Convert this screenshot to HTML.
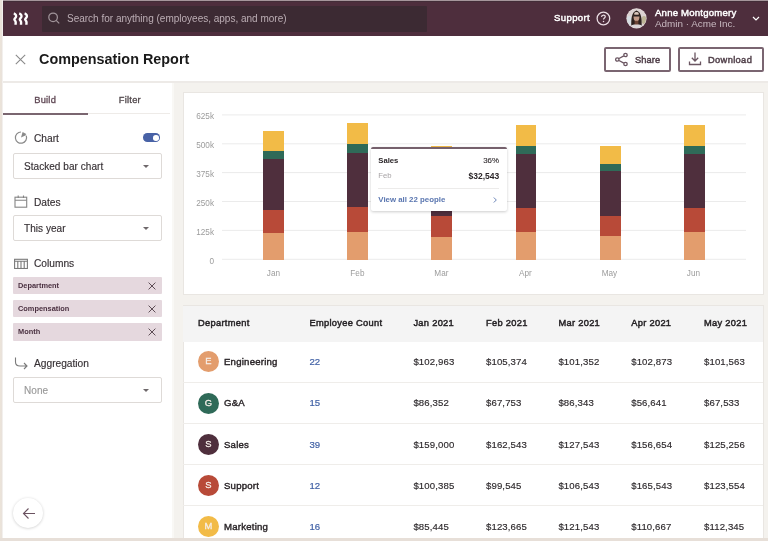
<!DOCTYPE html>
<html><head><meta charset="utf-8">
<style>
*{box-sizing:border-box;margin:0;padding:0}
html,body{width:768px;height:541px;overflow:hidden;background:#f4f2ee;font-family:"Liberation Sans",sans-serif;}
.a{position:absolute;white-space:nowrap}
#wrap{position:absolute;left:0;top:0;width:768px;height:541px;background:#f4f2ee;overflow:hidden;filter:blur(0.35px)}
#lb{position:absolute;left:0;top:0;width:3px;height:541px;background:linear-gradient(to right,#ebe3d8 0,#e9e2dc 2px,#f1eeeb 2px,#f4f2ef 3px)}
#top{position:absolute;left:3px;top:2px;width:765px;height:34px;background:#4e2e3d}
#topline{position:absolute;left:3px;top:0;width:765px;height:2px;background:linear-gradient(#a6969c 0,#a6969c 1px,#432d38 1px)}
#search{position:absolute;left:42px;top:6px;width:384.5px;height:25.5px;background:#3c2a33;border-radius:1px}
#hdr{position:absolute;left:3px;top:36px;width:765px;height:47px;background:#fff;border-bottom:2px solid #edeae7}
.btn{position:absolute;border:2px solid #7a6571;border-radius:2px;background:#fff;color:#4a3040;font-weight:700;font-size:9.3px}
#left{position:absolute;left:3px;top:83px;width:168.5px;height:456px;background:#fff}
#ledge{position:absolute;left:171.5px;top:83px;width:2.5px;height:456px;background:#f9f8f5}
.sel{position:absolute;left:13px;width:149px;border:1px solid #dedad7;border-radius:2px;background:#fff}
.sel span{position:absolute;left:10px;font-size:10px;color:#363034;-webkit-text-stroke:0.15px currentColor;letter-spacing:0.05px}
.caret{position:absolute;right:12px;width:0;height:0;border-left:3px solid transparent;border-right:3px solid transparent;border-top:3.5px solid #6e686b}
.lbl{font-size:10.2px;color:#363034;-webkit-text-stroke:0.15px currentColor}
.tag{position:absolute;left:13px;width:149px;height:17.2px;background:#e5d8de;border-radius:1px}
.tag span{position:absolute;left:5px;top:3.5px;font-size:7.4px;font-weight:700;color:#4a3040}
.card{position:absolute;background:#fff;border:1px solid #e9e6e2}
.yl{position:absolute;font-size:8.2px;color:#9c9c9c;text-align:right;width:40px}
.gl{position:absolute;left:222px;width:524px;height:1px;background:#ececec}
.bar{position:absolute;width:20.8px}
.ml{position:absolute;font-size:8.2px;color:#9c9c9c;text-align:center;width:40px}
.th{position:absolute;font-size:9.3px;font-weight:400;-webkit-text-stroke:0.45px #252225;letter-spacing:0.3px;color:#252225}
.med{font-weight:400 !important;-webkit-text-stroke:0.3px currentColor;letter-spacing:0.25px}
.td{position:absolute;font-size:9.6px;color:#2e2a2d;letter-spacing:0.12px;-webkit-text-stroke:0.15px #2e2a2d}
.num{position:absolute;font-size:9.6px;color:#4262a6;-webkit-text-stroke:0.2px #4262a6}
.dept{position:absolute;font-size:9.6px;font-weight:400;-webkit-text-stroke:0.4px #2a2528;letter-spacing:0.22px;color:#2a2528}
.av{position:absolute;left:198px;width:21px;height:21px;border-radius:50%;color:#f6eee8;font-size:9.4px;-webkit-text-stroke:0.3px #f6eee8;text-align:center;line-height:20px}
.rb{position:absolute;left:183px;width:580px;height:1px;background:#efedea}
</style></head><body>
<div id="wrap">
<div id="lb"></div>
<div id="topline"></div>
<div id="top"></div>
<!-- logo -->
<svg class="a" style="left:12px;top:11.5px" width="18" height="14" viewBox="0 0 18 14">
<g fill="none" stroke="#fff" stroke-width="2.4" stroke-linejoin="round">
<path d="M1.8 1.3 C3.8 2 4.6 3.6 3.8 5.3 C3.3 6.3 2.4 6.8 2.4 7.6 C2.4 8.4 3.7 8.9 3.7 10.2 L3.6 12.8"/>
<path d="M7.2 1.3 C9.2 2 10 3.6 9.2 5.3 C8.7 6.3 7.8 6.8 7.8 7.6 C7.8 8.4 9.1 8.9 9.1 10.2 L9 12.8"/>
<path d="M12.6 1.3 C14.6 2 15.4 3.6 14.6 5.3 C14.1 6.3 13.2 6.8 13.2 7.6 C13.2 8.4 14.5 8.9 14.5 10.2 L14.4 12.8"/>
</g></svg>
<div id="search"></div>
<svg class="a" style="left:48px;top:11.6px" width="14" height="13" viewBox="0 0 14 13">
<circle cx="5.1" cy="5.3" r="4.3" fill="none" stroke="#a0949a" stroke-width="1.25"/>
<path d="M8.2 8.4 L11.2 11.4" stroke="#a0949a" stroke-width="1.3"/>
</svg>
<div class="a" style="left:67px;top:13px;font-size:10px;color:#bcaeb5">Search for anything (employees, apps, and more)</div>
<div class="a med" style="left:554px;top:12px;font-size:9.6px;color:#fff;letter-spacing:0.36px;-webkit-text-stroke:0.45px #fff">Support</div>
<svg class="a" style="left:596px;top:10.6px" width="15" height="15" viewBox="0 0 15 15">
<circle cx="7.4" cy="7.5" r="6.3" fill="none" stroke="#ecdfe5" stroke-width="1.25"/>
<path d="M5.6 6 C5.6 4.7 6.4 4.1 7.4 4.1 C8.5 4.1 9.3 4.8 9.3 5.8 C9.3 7 7.5 7.2 7.5 8.6" fill="none" stroke="#ecdfe5" stroke-width="1.2"/>
<circle cx="7.5" cy="10.5" r="0.75" fill="#ecdfe5"/>
</svg>
<!-- avatar -->
<svg class="a" style="left:626px;top:8px" width="21" height="21" viewBox="0 0 21 21">
<defs><clipPath id="cp"><circle cx="10.5" cy="10.4" r="9.6"/></clipPath></defs>
<circle cx="10.5" cy="10.4" r="10.1" fill="#e6dcdc"/>
<g clip-path="url(#cp)">
<rect x="0" y="0" width="21" height="21" fill="#dcd2d2"/>
<ellipse cx="3" cy="13" rx="3" ry="5" fill="#d5dde2"/>
<ellipse cx="18" cy="12" rx="2.5" ry="4" fill="#bdb596"/>
<path d="M5.3 18 C5.3 12 5 4.5 10.5 2.6 C16 4.5 15.7 12 15.7 18 Z" fill="#2c211d"/>
<ellipse cx="10.5" cy="9.2" rx="2.9" ry="3.9" fill="#c29a88"/>
<ellipse cx="10.5" cy="5.4" rx="2.2" ry="1.4" fill="#d8c6bc"/>
<rect x="7.3" y="6.7" width="6.4" height="1.9" rx="0.8" fill="#2a2020"/>
<rect x="8.6" y="12.8" width="3.8" height="4.5" fill="#6a4436"/>
<path d="M2 21 C4 17 7 16.5 10.5 16.5 C14 16.5 17 17 19 21 Z" fill="#d9d5d8"/>
</g>
</svg>
<div class="a med" style="left:655px;top:6.6px;font-size:9.6px;color:#fff;letter-spacing:0.2px;-webkit-text-stroke:0.45px #fff">Anne Montgomery</div>
<div class="a" style="left:655px;top:17.8px;font-size:9.9px;color:#c8b9c0">Admin · Acme Inc.</div>
<svg class="a" style="left:751px;top:15px" width="10" height="7" viewBox="0 0 10 7">
<path d="M2 2 L5 5 L8 2" fill="none" stroke="#fff" stroke-width="1.2"/>
</svg>

<div id="hdr"></div>
<svg class="a" style="left:15px;top:54px" width="11" height="11" viewBox="0 0 11 11">
<path d="M0.8 0.8 L10.2 10.2 M10.2 0.8 L0.8 10.2" stroke="#8a8a8a" stroke-width="1.1"/>
</svg>
<div class="a" style="left:39px;top:50.5px;font-size:14.4px;font-weight:700;color:#1a1a1a">Compensation Report</div>
<div class="btn" style="left:603.5px;top:47px;width:67px;height:25px"></div>
<svg class="a" style="left:614px;top:52px" width="15" height="15" viewBox="0 0 15 15">
<g fill="none" stroke="#6a5561" stroke-width="1.3">
<circle cx="3.3" cy="7.5" r="1.7"/><circle cx="11.5" cy="3" r="1.7"/><circle cx="11.5" cy="12" r="1.7"/>
<path d="M5 6.5 L9.8 3.9 M5 8.5 L9.8 11.1"/>
</g></svg>
<div class="a med" style="left:635px;top:54.7px;font-size:9.3px;color:#51404a;letter-spacing:0.1px;-webkit-text-stroke:0.45px #51404a">Share</div>
<div class="btn" style="left:677.5px;top:47px;width:86px;height:25px"></div>
<svg class="a" style="left:688px;top:51px" width="14" height="15" viewBox="0 0 14 15">
<g fill="none" stroke="#6a5561" stroke-width="1.3">
<path d="M7 1.5 L7 10 M3.8 6.8 L7 10 L10.2 6.8"/>
<path d="M1.5 10.5 L1.5 13.5 L12.5 13.5 L12.5 10.5"/>
</g></svg>
<div class="a med" style="left:708px;top:54.7px;font-size:9.3px;color:#51404a;letter-spacing:0.35px;-webkit-text-stroke:0.45px #51404a">Download</div>

<!-- left panel -->
<div id="left"></div><div id="ledge"></div>
<div class="a" style="left:3px;top:113px;width:167px;height:1px;background:#eeebe8"></div>
<div class="a" style="left:3px;top:112.5px;width:85px;height:2px;background:#7a6670"></div>
<div class="a med" style="left:34.2px;top:95.3px;font-size:9.3px;color:#5e4653">Build</div>
<div class="a med" style="left:118.8px;top:95.3px;font-size:9.3px;color:#4e4549">Filter</div>

<svg class="a" style="left:14px;top:131px" width="14" height="14" viewBox="0 0 14 14">
<path d="M7 1 A5.6 5.6 0 1 0 12.3 4.8" fill="none" stroke="#8a8a8a" stroke-width="1.2"/>
<path d="M7 6.6 L8.6 0.9 A5.9 5.9 0 0 1 12.4 4.1 Z" fill="#8a8a8a"/>
</svg>
<div class="a lbl" style="left:34px;top:132.6px">Chart</div>
<div class="a" style="left:143.3px;top:133.4px;width:16.8px;height:8.6px;border-radius:4.3px;background:#4862a6"></div>
<div class="a" style="left:153.1px;top:135px;width:5.6px;height:5.6px;border-radius:50%;background:#fff"></div>
<div class="sel" style="top:153px;height:26px"><span style="top:6.5px">Stacked bar chart</span><div class="caret" style="top:10.5px"></div></div>

<svg class="a" style="left:14px;top:195px" width="14" height="13" viewBox="0 0 14 13">
<g fill="none" stroke="#858585" stroke-width="1.1">
<rect x="1" y="2.2" width="11.7" height="10"/><path d="M1 5.2 L12.7 5.2 M4.2 0.6 L4.2 3 M9.5 0.6 L9.5 3"/>
</g></svg>
<div class="a lbl" style="left:34px;top:197px">Dates</div>
<div class="sel" style="top:215px;height:26px"><span style="top:6.5px">This year</span><div class="caret" style="top:10.5px"></div></div>

<svg class="a" style="left:14px;top:258px" width="14" height="11" viewBox="0 0 14 11">
<g fill="none" stroke="#7a7a7a" stroke-width="1.1">
<rect x="0.6" y="1.3" width="12.8" height="9.2"/><path d="M0.6 3.2 L13.4 3.2 M3.8 3.2 L3.8 10.5 M7 3.2 L7 10.5 M10.2 3.2 L10.2 10.5"/>
</g></svg>
<div class="a lbl" style="left:34px;top:258.4px">Columns</div>
<div class="tag" style="top:277px"><span>Department</span></div>
<div class="tag" style="top:300.2px"><span>Compensation</span></div>
<div class="tag" style="top:323.4px"><span>Month</span></div>
<svg class="a" style="left:148px;top:282px" width="8" height="8" viewBox="0 0 8 8"><path d="M0.6 0.6 L7.4 7.4 M7.4 0.6 L0.6 7.4" stroke="#55454d" stroke-width="0.95"/></svg>
<svg class="a" style="left:148px;top:305.2px" width="8" height="8" viewBox="0 0 8 8"><path d="M0.6 0.6 L7.4 7.4 M7.4 0.6 L0.6 7.4" stroke="#55454d" stroke-width="0.95"/></svg>
<svg class="a" style="left:148px;top:328.4px" width="8" height="8" viewBox="0 0 8 8"><path d="M0.6 0.6 L7.4 7.4 M7.4 0.6 L0.6 7.4" stroke="#55454d" stroke-width="0.95"/></svg>

<svg class="a" style="left:14px;top:357px" width="15" height="13" viewBox="0 0 15 13">
<g fill="none" stroke="#7a7a7a" stroke-width="1.1">
<path d="M1.5 0.5 L1.5 5 C1.5 8 3 9 6 9 L13 9 M10 6 L13 9 L10 12"/>
</g></svg>
<div class="a lbl" style="left:34px;top:358.3px">Aggregation</div>
<div class="sel" style="top:377px;height:26px"><span style="top:6.5px;color:#9a9a9a">None</span><div class="caret" style="top:10.5px"></div></div>

<!-- back button -->
<div class="a" style="left:12.5px;top:498px;width:30px;height:30px;border-radius:50%;background:#fff;box-shadow:0 0.5px 3px rgba(0,0,0,0.2)"></div>
<svg class="a" style="left:21.5px;top:506.5px" width="14" height="13" viewBox="0 0 14 13">
<path d="M13 6.5 L1.5 6.5 M6.5 1.5 L1.5 6.5 L6.5 11.5" fill="none" stroke="#6a5260" stroke-width="1.1"/>
</svg>

<!-- chart card -->
<div class="card" style="left:182.5px;top:92px;width:581px;height:203px"></div>
<svg class="a" style="left:0;top:0" width="768" height="300"><g stroke="#ebebeb" stroke-width="1"><line x1="222" x2="746" y1="114.9" y2="114.9"/><line x1="222" x2="746" y1="143.8" y2="143.8"/><line x1="222" x2="746" y1="172.6" y2="172.6"/><line x1="222" x2="746" y1="201.5" y2="201.5"/><line x1="222" x2="746" y1="230.4" y2="230.4"/><line x1="222" x2="746" y1="259.3" y2="259.3"/></g></svg>
<div class="yl" style="left:174px;top:111.7px">625k</div>
<div class="yl" style="left:174px;top:140.7px">500k</div>
<div class="yl" style="left:174px;top:169.5px">375k</div>
<div class="yl" style="left:174px;top:198.5px">250k</div>
<div class="yl" style="left:174px;top:227.5px">125k</div>
<div class="yl" style="left:174px;top:256.7px">0</div>

<!-- bars: x, segments -->
<div class="bar" style="left:263px;top:131.25px;height:19.75px;background:#f2bb47"></div>
<div class="bar" style="left:263px;top:151px;height:8.00px;background:#2f6a58"></div>
<div class="bar" style="left:263px;top:159px;height:51.30px;background:#4f2f3d"></div>
<div class="bar" style="left:263px;top:210.3px;height:22.90px;background:#b84a38"></div>
<div class="bar" style="left:263px;top:233.2px;height:26.80px;background:#e39d6d"></div>
<div class="bar" style="left:347px;top:122.9px;height:21.40px;background:#f2bb47"></div>
<div class="bar" style="left:347px;top:144.3px;height:8.30px;background:#2f6a58"></div>
<div class="bar" style="left:347px;top:152.6px;height:54.60px;background:#4f2f3d"></div>
<div class="bar" style="left:347px;top:207.2px;height:24.50px;background:#b84a38"></div>
<div class="bar" style="left:347px;top:231.7px;height:28.30px;background:#e39d6d"></div>
<div class="bar" style="left:431px;top:145.8px;height:3.50px;background:#f2bb47"></div>
<div class="bar" style="left:431px;top:150px;height:7.00px;background:#2f6a58"></div>
<div class="bar" style="left:431px;top:157px;height:59.00px;background:#4f2f3d"></div>
<div class="bar" style="left:431px;top:216px;height:20.90px;background:#b84a38"></div>
<div class="bar" style="left:431px;top:236.9px;height:23.10px;background:#e39d6d"></div>
<div class="bar" style="left:515.6px;top:124.8px;height:21.10px;background:#f2bb47"></div>
<div class="bar" style="left:515.6px;top:145.9px;height:7.85px;background:#2f6a58"></div>
<div class="bar" style="left:515.6px;top:153.75px;height:53.95px;background:#4f2f3d"></div>
<div class="bar" style="left:515.6px;top:207.7px;height:24.30px;background:#b84a38"></div>
<div class="bar" style="left:515.6px;top:232.0px;height:28.00px;background:#e39d6d"></div>
<div class="bar" style="left:600px;top:145.9px;height:18.00px;background:#f2bb47"></div>
<div class="bar" style="left:600px;top:163.9px;height:6.80px;background:#2f6a58"></div>
<div class="bar" style="left:600px;top:170.7px;height:45.30px;background:#4f2f3d"></div>
<div class="bar" style="left:600px;top:216px;height:20.40px;background:#b84a38"></div>
<div class="bar" style="left:600px;top:236.4px;height:23.60px;background:#e39d6d"></div>
<div class="bar" style="left:684px;top:124.8px;height:21.20px;background:#f2bb47"></div>
<div class="bar" style="left:684px;top:146px;height:8.40px;background:#2f6a58"></div>
<div class="bar" style="left:684px;top:154.4px;height:53.60px;background:#4f2f3d"></div>
<div class="bar" style="left:684px;top:208px;height:24.20px;background:#b84a38"></div>
<div class="bar" style="left:684px;top:232.2px;height:27.80px;background:#e39d6d"></div>
<div class="a" style="left:370.5px;top:147.3px;width:136.5px;height:64px;background:#fff;border-top:2px solid #75606c;border-radius:2px;box-shadow:0 1px 3px rgba(0,0,0,0.2)"></div>
<div class="a" style="left:378.3px;top:155.5px;font-size:7.7px;font-weight:700;color:#2a2528">Sales</div>
<div class="a" style="left:470px;top:155.5px;width:29px;text-align:right;font-size:7.9px;color:#3a3538;-webkit-text-stroke:0.15px #3a3538">36%</div>
<div class="a" style="left:378.3px;top:171px;font-size:7.7px;color:#a8a4a6">Feb</div>
<div class="a" style="left:450px;top:170.5px;width:49.2px;text-align:right;font-size:8.5px;font-weight:700;color:#2a2528">$32,543</div>
<div class="a" style="left:378px;top:188px;width:121px;height:1px;background:#ecebea"></div>
<div class="a" style="left:378.3px;top:194.5px;font-size:7.85px;font-weight:700;color:#5a76b0">View all 22 people</div>
<svg class="a" style="left:492px;top:196px" width="6" height="8" viewBox="0 0 6 8"><path d="M1.8 1.5 L4.3 4 L1.8 6.5" fill="none" stroke="#5a76b0" stroke-width="0.9"/></svg>

<div class="ml" style="left:253.4px;top:268.5px">Jan</div>
<div class="ml" style="left:337.4px;top:268.5px">Feb</div>
<div class="ml" style="left:421.4px;top:268.5px">Mar</div>
<div class="ml" style="left:505.4px;top:268.5px">Apr</div>
<div class="ml" style="left:589.4px;top:268.5px">May</div>
<div class="ml" style="left:673.4px;top:268.5px">Jun</div>

<!-- table card -->
<div class="card" style="left:182.5px;top:304.5px;width:581px;height:240px"></div>
<div class="a" style="left:183px;top:305.5px;width:579.5px;height:36px;background:#f4f4f4"></div>
<div class="th" style="left:198px;top:318.4px">Department</div>
<div class="th" style="left:309.4px;top:318.4px">Employee Count</div>
<div class="th" style="left:413.4px;top:318.4px">Jan 2021</div>
<div class="th" style="left:486px;top:318.4px">Feb 2021</div>
<div class="th" style="left:558.4px;top:318.4px">Mar 2021</div>
<div class="th" style="left:631.2px;top:318.4px">Apr 2021</div>
<div class="th" style="left:704px;top:318.4px">May 2021</div>
<div class="av" style="top:351.4px;background:#e39d6d">E</div>
<div class="dept" style="left:224px;top:356.2px">Engineering</div>
<div class="num" style="left:309.4px;top:356.2px">22</div>
<div class="td" style="left:413.4px;top:356.2px">$102,963</div>
<div class="td" style="left:486px;top:356.2px">$105,374</div>
<div class="td" style="left:558.4px;top:356.2px">$101,352</div>
<div class="td" style="left:631.2px;top:356.2px">$102,873</div>
<div class="td" style="left:704px;top:356.2px">$101,563</div>
<div class="rb" style="top:381.6px"></div>
<div class="av" style="top:392.6px;background:#2f6a58">G</div>
<div class="dept" style="left:224px;top:397.3px">G&amp;A</div>
<div class="num" style="left:309.4px;top:397.3px">15</div>
<div class="td" style="left:413.4px;top:397.3px">$86,352</div>
<div class="td" style="left:486px;top:397.3px">$67,753</div>
<div class="td" style="left:558.4px;top:397.3px">$86,343</div>
<div class="td" style="left:631.2px;top:397.3px">$56,641</div>
<div class="td" style="left:704px;top:397.3px">$67,533</div>
<div class="rb" style="top:422.9px"></div>
<div class="av" style="top:433.7px;background:#4f2f3d">S</div>
<div class="dept" style="left:224px;top:438.5px">Sales</div>
<div class="num" style="left:309.4px;top:438.5px">39</div>
<div class="td" style="left:413.4px;top:438.5px">$159,000</div>
<div class="td" style="left:486px;top:438.5px">$162,543</div>
<div class="td" style="left:558.4px;top:438.5px">$127,543</div>
<div class="td" style="left:631.2px;top:438.5px">$156,654</div>
<div class="td" style="left:704px;top:438.5px">$125,256</div>
<div class="rb" style="top:464.1px"></div>
<div class="av" style="top:474.9px;background:#b84a38">S</div>
<div class="dept" style="left:224px;top:479.6px">Support</div>
<div class="num" style="left:309.4px;top:479.6px">12</div>
<div class="td" style="left:413.4px;top:479.6px">$100,385</div>
<div class="td" style="left:486px;top:479.6px">$99,545</div>
<div class="td" style="left:558.4px;top:479.6px">$106,543</div>
<div class="td" style="left:631.2px;top:479.6px">$165,543</div>
<div class="td" style="left:704px;top:479.6px">$123,554</div>
<div class="rb" style="top:505.2px"></div>
<div class="av" style="top:516.0px;background:#f2bb47">M</div>
<div class="dept" style="left:224px;top:520.8px">Marketing</div>
<div class="num" style="left:309.4px;top:520.8px">16</div>
<div class="td" style="left:413.4px;top:520.8px">$85,445</div>
<div class="td" style="left:486px;top:520.8px">$123,665</div>
<div class="td" style="left:558.4px;top:520.8px">$121,543</div>
<div class="td" style="left:631.2px;top:520.8px">$110,667</div>
<div class="td" style="left:704px;top:520.8px">$112,345</div>
<div class="a" style="left:0;top:538.4px;width:768px;height:2.6px;background:#e7dfd8"></div>
</div>
</body></html>
